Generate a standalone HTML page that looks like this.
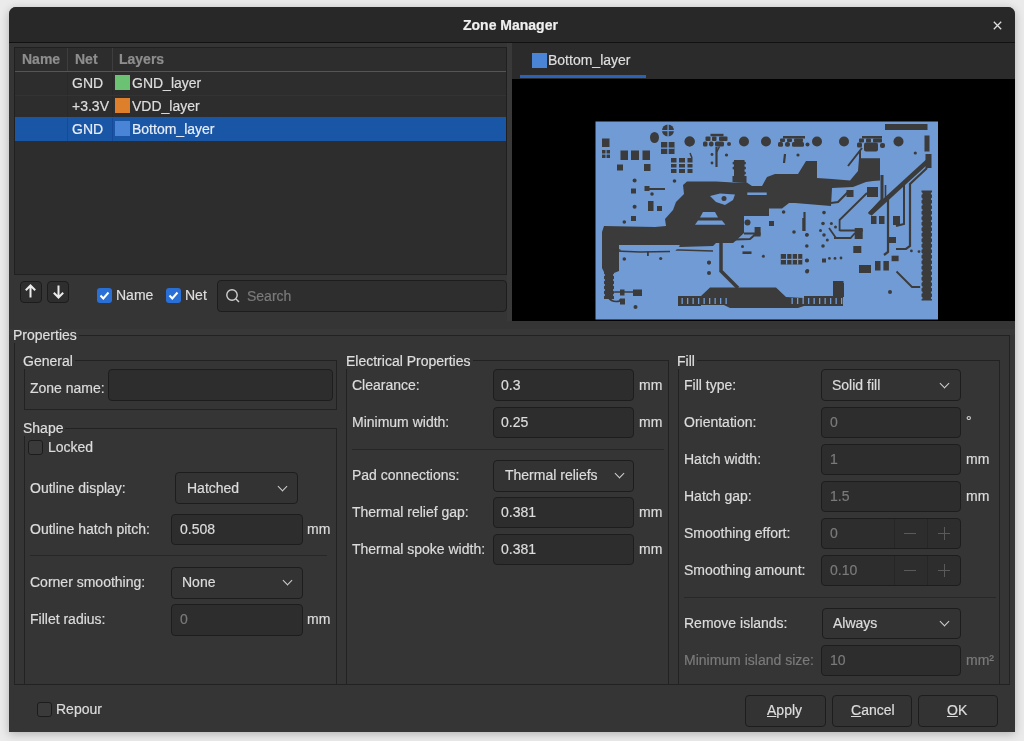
<!DOCTYPE html>
<html><head><meta charset="utf-8">
<style>
*{margin:0;padding:0;box-sizing:border-box}
html,body{width:1024px;height:741px;overflow:hidden;background:#ebebeb;font-family:"Liberation Sans",sans-serif;font-size:14px;color:#dedede}
.a{position:absolute}
.t{position:absolute;line-height:16px;white-space:nowrap;will-change:transform;-webkit-text-stroke:0.2px currentColor}
#win{position:absolute;left:9px;top:7px;width:1006px;height:725px;background:#353535;border-radius:7px 7px 0 0;box-shadow:0 2px 10px rgba(0,0,0,.25);overflow:hidden}
#title{position:absolute;left:0;top:0;width:1006px;height:36px;background:#282828;border-bottom:1px solid #121212}
.inp{position:absolute;background:#2d2d2d;border:1px solid #1d1d1d;border-radius:4px}
.btn{position:absolute;background:#333;border:1px solid #1d1d1d;border-radius:4px}
.grp{position:absolute;border:1px solid #222}
.lbl{position:absolute;line-height:16px;white-space:nowrap;color:#dcdcdc;will-change:transform;-webkit-text-stroke:0.2px currentColor}
.dis{color:#7a7a7a}
.chev{position:absolute;width:7px;height:7px;border-right:1.5px solid #d0d0d0;border-bottom:1.5px solid #d0d0d0;transform:rotate(45deg)}
.sw{position:absolute;width:15px;height:15px}
.cb{position:absolute;width:15px;height:15px;border-radius:3px}
</style></head><body>
<div id="win">
  <div id="title"></div>
</div>
<!-- absolute coords relative to page below -->
<div class="t" style="left:463px;top:17px;font-weight:bold;color:#f0f0f0">Zone Manager</div>
<svg class="a" style="left:991px;top:18.5px" width="12" height="12" viewBox="0 0 12 12"><path d="M2.8 2.8L10.2 10.2M10.2 2.8L2.8 10.2" stroke="#dedede" stroke-width="1.3"/></svg>

<!-- sash strips -->
<div class="a" style="left:507px;top:43px;width:5px;height:278px;background:#393939"></div>
<div class="a" style="left:9px;top:329px;width:1006px;height:6px;background:#383838"></div>
<!-- table -->
<div class="a" style="left:14px;top:47px;width:493px;height:228px;background:#2d2d2d;border:1px solid #202020"></div>
<div class="a" style="left:15px;top:71px;width:491px;height:1px;background:#555"></div>
<div class="a" style="left:67px;top:48px;width:1px;height:23px;background:#3e3e3e"></div>
<div class="a" style="left:112px;top:48px;width:1px;height:23px;background:#3e3e3e"></div>
<div class="a" style="left:67px;top:72px;width:1px;height:46px;background:#292929"></div>
<div class="a" style="left:112px;top:72px;width:1px;height:46px;background:#292929"></div>
<div class="a" style="left:15px;top:95px;width:491px;height:1px;background:#333"></div>
<div class="a" style="left:15px;top:117px;width:491px;height:24px;background:#1a56a6"></div>
<div class="a" style="left:67px;top:118px;width:1px;height:23px;background:#17499a"></div>
<div class="a" style="left:112px;top:118px;width:1px;height:23px;background:#17499a"></div>
<div class="t" style="left:22px;top:51px;font-weight:bold;color:#8e8e8e">Name</div>
<div class="t" style="left:75px;top:51px;font-weight:bold;color:#8e8e8e">Net</div>
<div class="t" style="left:119px;top:51px;font-weight:bold;color:#8e8e8e">Layers</div>
<div class="t" style="left:72px;top:75px">GND</div>
<div class="sw" style="left:115px;top:75px;background:#6cc273"></div>
<div class="t" style="left:132px;top:75px">GND_layer</div>
<div class="t" style="left:72px;top:98px">+3.3V</div>
<div class="sw" style="left:115px;top:98px;background:#de7f2c"></div>
<div class="t" style="left:132px;top:98px">VDD_layer</div>
<div class="t" style="left:72px;top:121px;color:#e8eef8">GND</div>
<div class="sw" style="left:115px;top:121px;background:#4a84d6"></div>
<div class="t" style="left:132px;top:121px;color:#e8eef8">Bottom_layer</div>

<!-- up/down -->
<div class="btn" style="left:19.5px;top:280.5px;width:22px;height:22px;background:#2e2e2e;border:1.5px solid #1c1c1c;border-radius:4px"></div>
<div class="btn" style="left:47px;top:280.5px;width:22px;height:22px;background:#2e2e2e;border:1.5px solid #1c1c1c;border-radius:4px"></div>
<svg class="a" style="left:19px;top:280px" width="23" height="23"><path d="M11.5 5.5V17.5M6.8 10.2L11.5 5.5L16.2 10.2" stroke="#ececec" stroke-width="2" fill="none"/></svg>
<svg class="a" style="left:47px;top:280px" width="23" height="23"><path d="M11.5 5.5V17.5M6.8 12.8L11.5 17.5L16.2 12.8" stroke="#ececec" stroke-width="2" fill="none"/></svg>
<div class="cb" style="left:97px;top:288px;background:#2a6fd6"></div>
<svg class="a" style="left:97px;top:288px" width="15" height="15"><path d="M3.5 7.5L6.3 10.5L11.5 4.5" stroke="#fff" stroke-width="2" fill="none"/></svg>
<div class="t" style="left:116px;top:287px">Name</div>
<div class="cb" style="left:166px;top:288px;background:#2a6fd6"></div>
<svg class="a" style="left:166px;top:288px" width="15" height="15"><path d="M3.5 7.5L6.3 10.5L11.5 4.5" stroke="#fff" stroke-width="2" fill="none"/></svg>
<div class="t" style="left:185px;top:287px">Net</div>
<div class="inp" style="left:217px;top:280px;width:290px;height:32px;background:#2e2e2e;border-radius:4px"></div>
<svg class="a" style="left:224px;top:287px" width="18" height="18"><circle cx="8" cy="8" r="5.2" stroke="#cfcfcf" stroke-width="1.4" fill="none"/><path d="M12 12L15 15" stroke="#cfcfcf" stroke-width="1.4"/></svg>
<div class="t dis" style="left:247px;top:288px">Search</div>

<!-- preview -->
<div class="a" style="left:512px;top:43px;width:503px;height:36px;background:#2b2b2b"></div>
<div class="sw" style="left:532px;top:53px;background:#4a84d6"></div>
<div class="t" style="left:548px;top:52px">Bottom_layer</div>
<div class="a" style="left:520px;top:75px;width:126px;height:3px;background:#2a62b8"></div>
<svg class="a" style="left:512px;top:79px" width="503" height="242" viewBox="512 79 503 242">
<rect x="512" y="79" width="503" height="242" fill="#000"/>
<rect x="595.5" y="121.5" width="342.5" height="198" fill="#709bd5"/>
<g fill="#3b3b3b">
<!-- central pour -->
<path d="M604,226 L655,227 L666,226 L665,219 L673,210 L676,202 L684,194 L683,185 L687,181.5 L716,181.5 L733,182.5 L746,182 L752,186 L762,186 L767,177 L775,174 L798,174 L806,161 L817,161 L817,178 L832,179 L850,180.5 L858,171 L859,158.5 L880,158.5 L880,180 L866,182 L853,187 L832,188 L831,206 L795,203 L789,203 L782,208.5 L769,208.5 L769,216 L744,216 L744,233 L736,240.5 L733,243 L716,243 L713,246 L680,247 L676,245 L619,245 L619,271 L614,273 L614,299 L604,299 L604,272 L602,268 L602,232 Z"/>
<!-- left scalloped column pads -->
<rect x="620" y="289.5" width="4.5" height="6"/><rect x="633" y="289.5" width="9" height="6.5"/><rect x="620" y="298.5" width="5" height="6"/>
<!-- bottom polygon -->
<path d="M701,296 L710,287.5 L776,287.5 L786,297 L804,298 L804,306 L798,308 L730,308 L724,305 L701,305 Z"/>
<!-- trace into bottom polygon -->
<path d="M721,243 L721,271 L738,288" fill="none" stroke="#3b3b3b" stroke-width="3.5"/>
<!-- right pad column -->
<rect x="921.5" y="190.5" width="10.5" height="110"/>
<!-- top bar -->
<rect x="885" y="124" width="42.5" height="6"/>
<!-- thick diagonal -->
<path d="M929,160 L870,214" fill="none" stroke="#3b3b3b" stroke-width="4.5"/>
<rect x="925.5" y="154" width="6" height="14"/>
<!-- circles -->
<circle cx="689.5" cy="141.5" r="5"/><circle cx="744" cy="141.5" r="5"/><circle cx="766" cy="141.5" r="5"/><circle cx="817" cy="141.5" r="5"/><circle cx="844" cy="141.5" r="5"/><circle cx="898.5" cy="141.5" r="5"/>
<!-- connector blobs -->
<rect x="710.5" y="133.8" width="13" height="2.5"/><rect x="705.5" y="136.5" width="5" height="4.5" rx="1"/><rect x="712" y="136.5" width="4.5" height="4.5" rx="1"/><rect x="719" y="136.5" width="8.5" height="4.5" rx="1"/><rect x="703" y="141.5" width="4.5" height="5" rx="1.5"/><rect x="709" y="141.5" width="4.5" height="5" rx="2"/><rect x="715" y="141.5" width="9" height="5" rx="1.5"/><rect x="727" y="142" width="4" height="4" rx="2"/><path d="M719.5,146.5 L716.8,152" stroke="#3b3b3b" stroke-width="1.5"/>
<rect x="783" y="136" width="22" height="2.5"/><rect x="780" y="138.5" width="5" height="3.5" rx="1"/><rect x="787" y="138.5" width="5" height="3.5" rx="1"/><rect x="794" y="138.5" width="9" height="3.5" rx="1"/><rect x="778" y="142" width="5" height="4.8" rx="1.5"/><rect x="785" y="142" width="5" height="4.8" rx="2"/><rect x="792" y="142" width="12" height="4.8" rx="1.5"/><rect x="805.5" y="142.5" width="4" height="4" rx="2"/>
<rect x="862" y="136" width="20" height="2.5"/><rect x="859" y="138.5" width="5" height="4" rx="1"/><rect x="866" y="138.5" width="5" height="4" rx="1"/><rect x="873" y="138.5" width="9" height="4" rx="1"/><rect x="857" y="142.5" width="5" height="5" rx="1.5"/><rect x="864" y="142.5" width="14" height="9" rx="2"/><rect x="880" y="143" width="5" height="5" rx="2"/>
<!-- pad stacks -->
<rect x="734" y="160" width="10.5" height="22"/><rect x="732.5" y="176" width="14" height="6"/><circle cx="734" cy="163" r="1.5"/><circle cx="744.5" cy="163" r="1.5"/><circle cx="734" cy="168" r="1.5"/><circle cx="744.5" cy="168" r="1.5"/><circle cx="744.5" cy="173" r="1.5"/>
<rect x="859" y="158.5" width="21" height="22"/>
<rect x="924.5" y="135.5" width="5" height="16"/>
<!-- top left small pads -->
<rect x="602" y="138.5" width="7.5" height="8.5"/><rect x="602" y="150" width="8" height="8"/>
<rect x="620.5" y="150.5" width="7.5" height="9.5"/><rect x="631" y="150.5" width="8" height="9.5"/><rect x="642.5" y="150.5" width="7.5" height="9.5"/>
<rect x="617" y="164.5" width="6" height="6"/><rect x="644" y="164" width="6.5" height="7"/>
<ellipse cx="654.5" cy="137.5" rx="4.5" ry="5.5"/>
<circle cx="668" cy="130.5" r="6"/>
<rect x="661" y="142" width="13.5" height="12"/>
<circle cx="689.8" cy="141.5" r="5"/>
<rect x="671" y="158" width="5.5" height="15"/><rect x="679" y="158" width="6" height="15"/><rect x="687.5" y="158" width="5" height="15"/>
<circle cx="674.5" cy="181" r="1.8"/><circle cx="634.6" cy="180.4" r="2"/><rect x="631" y="188.5" width="5" height="5"/>
<rect x="644.5" y="186" width="5" height="5"/><rect x="648" y="188" width="17" height="2"/>
<circle cx="652" cy="194" r="1.8"/><rect x="648" y="201" width="5.5" height="10"/><rect x="657" y="206" width="5" height="5"/>
<circle cx="634.6" cy="206.7" r="2"/><rect x="631" y="216" width="5" height="5"/>
<!-- left column -->
<rect x="604" y="272" width="10" height="27"/>
<path d="M614,292 L633,292 M608,297 Q612,303 620,301" fill="none" stroke="#3b3b3b" stroke-width="1.6"/>
<path d="M612,248 L614,250 L680,250 L713,251" fill="none" stroke="#3b3b3b" stroke-width="1.6"/>
<!-- connector row bottom -->
<rect x="678" y="296" width="23" height="10"/>
<rect x="804" y="296" width="39" height="10"/>
<!-- center-right traces -->
<path d="M927,168 L910,184 L910,246 L906,249 L896,249" fill="none" stroke="#3b3b3b" stroke-width="2.2"/>
<path d="M904,183 L904,224 L896,226" fill="none" stroke="#3b3b3b" stroke-width="2"/>
<path d="M888,197 L888,252 L884,255" fill="none" stroke="#3b3b3b" stroke-width="2.2"/>
<path d="M882,175 L882,200 L869,214" fill="none" stroke="#3b3b3b" stroke-width="3"/>
<path d="M885.5,185 L885.5,200" fill="none" stroke="#3b3b3b" stroke-width="1.6"/>
<path d="M848,166 L862,148 M860,150 L860,166" fill="none" stroke="#3b3b3b" stroke-width="2"/>
<path d="M831,203 L838,202 L849,191" fill="none" stroke="#3b3b3b" stroke-width="2"/>
<rect x="846.5" y="190" width="7" height="7"/><rect x="867" y="187" width="11" height="10"/>
<path d="M867,193 L839.6,220 L839.6,231 M839.6,230.5 L863,230.5 M834,238 L850.6,238 L855,233 M829,228 L836,238" fill="none" stroke="#3b3b3b" stroke-width="1.8"/>
<rect x="854.7" y="228" width="8" height="11"/>
<path d="M896.5,271.5 L912,287 L922,287" fill="none" stroke="#3b3b3b" stroke-width="1.8"/>
<rect x="871" y="216" width="5.5" height="8"/><rect x="879" y="216" width="5.5" height="8"/><rect x="893" y="216" width="7" height="9"/>
<rect x="889" y="237" width="7" height="6"/><rect x="853.3" y="246" width="8" height="7"/><rect x="891.6" y="255.7" width="7" height="5.5"/>
<rect x="859" y="265" width="12" height="8"/><rect x="875" y="261" width="5.5" height="9.5"/><rect x="883.4" y="261" width="5.5" height="9.5"/>
<path d="M804.5,212 L804.5,231" fill="none" stroke="#3b3b3b" stroke-width="2.2"/>
<circle cx="806.8" cy="235" r="1.8"/><circle cx="824" cy="212.6" r="1.8"/><circle cx="823" cy="223.5" r="1.8"/><circle cx="831.4" cy="223.5" r="1.5"/>
<circle cx="835.5" cy="227" r="1.5"/><circle cx="820.5" cy="230.4" r="1.5"/><circle cx="824" cy="235" r="1.8"/><circle cx="827.3" cy="240" r="1.5"/>
<circle cx="806.8" cy="246" r="1.8"/><circle cx="823" cy="246" r="1.8"/><circle cx="806.8" cy="260.5" r="1.8"/><rect x="822" y="258.5" width="4" height="4"/>
<circle cx="829.4" cy="258.4" r="1.4"/><circle cx="835" cy="258.4" r="1.4"/><circle cx="841" cy="258" r="1.4"/><circle cx="807.5" cy="270.7" r="1.8"/>
<circle cx="911.4" cy="250.9" r="1.4"/><circle cx="919" cy="251.6" r="1.4"/><circle cx="890" cy="292" r="2"/><circle cx="915.3" cy="153" r="1.6"/>
<rect x="833" y="281" width="10.5" height="16"/><path d="M843,283 L843,297" stroke="#3b3b3b" stroke-width="2"/>
<!-- mid region pads/dots -->
<rect x="780.8" y="254" width="21.5" height="10.5"/>
<rect x="769" y="221" width="5" height="5"/>
<path d="M803.5,218 L803.5,231" fill="none" stroke="#3b3b3b" stroke-width="2.5"/>
<circle cx="794" cy="232" r="1.8"/><circle cx="807" cy="234.7" r="1.8"/><circle cx="807" cy="260.4" r="2"/><circle cx="807" cy="271.5" r="2"/>
<circle cx="709" cy="262.5" r="2"/><circle cx="709" cy="273" r="2"/><circle cx="763.4" cy="256.2" r="1.5"/>
<rect x="742.5" y="251.4" width="9" height="2.6"/><circle cx="742.5" cy="246.5" r="1.5"/>
<circle cx="747.5" cy="222.5" r="3"/><rect x="754.6" y="227" width="6" height="8"/><path d="M744,233.4 L760.6,233.4 M735,239.5 L750,239 L754,235.5 L760.6,235.5" fill="none" stroke="#3b3b3b" stroke-width="2"/><circle cx="783.6" cy="212" r="1.8"/>
<!-- top traces -->
<path d="M716.5,147 L716.5,167 M785,154 L784,163" fill="none" stroke="#3b3b3b" stroke-width="2.2"/>
<circle cx="712" cy="154.5" r="1.4"/><circle cx="712" cy="163" r="1.4"/><circle cx="726.5" cy="155" r="1.6"/><circle cx="798" cy="155" r="1.6"/>
<path d="M690,153 L692,158" fill="none" stroke="#3b3b3b" stroke-width="1.5"/>
<circle cx="620" cy="300" r="1"/><circle cx="624.3" cy="259" r="1.8"/><circle cx="660.7" cy="258.5" r="1.6"/><circle cx="624.3" cy="222" r="1.8"/><path d="M630,244 Q636,249 645,247 L650,244 Z"/><rect x="647" y="246" width="1.8" height="10"/><rect x="658" y="244" width="1.5" height="6"/><circle cx="635.5" cy="307" r="2"/>
<circle cx="709" cy="262.8" r="1.8"/>
</g>
<!-- light holes in pour -->
<g fill="#709bd5">
<rect x="681.5" y="298" width="1.3" height="6"/><rect x="687.0" y="298" width="1.3" height="6"/><rect x="692.5" y="298" width="1.3" height="6"/><rect x="698.0" y="298" width="1.3" height="6"/><rect x="703.5" y="298" width="1.3" height="6"/><rect x="709.0" y="298" width="1.3" height="6"/><rect x="714.5" y="298" width="1.3" height="6"/><rect x="720.0" y="298" width="1.3" height="6"/><rect x="725.5" y="298" width="1.3" height="6"/><rect x="791.5" y="298" width="1.3" height="6"/><rect x="797.0" y="298" width="1.3" height="6"/><rect x="802.5" y="298" width="1.3" height="6"/><rect x="808.0" y="298" width="1.3" height="6"/><rect x="813.5" y="298" width="1.3" height="6"/><rect x="819.0" y="298" width="1.3" height="6"/><rect x="824.5" y="298" width="1.3" height="6"/><rect x="830.0" y="298" width="1.3" height="6"/><rect x="835.5" y="298" width="1.3" height="6"/><rect x="841.0" y="298" width="1.3" height="6"/><rect x="786" y="254" width="1.2" height="10.5"/><rect x="791.5" y="254" width="1.2" height="10.5"/><rect x="797" y="254" width="1.2" height="10.5"/><rect x="780.8" y="258.8" width="21.5" height="1.2"/><rect x="667.5" y="124" width="1.2" height="13"/><rect x="661.5" y="130" width="13" height="1.2"/><rect x="667.3" y="142" width="1.4" height="12"/><rect x="661" y="147.5" width="13.5" height="1.3"/><rect x="602" y="153.5" width="8" height="1.1"/><rect x="605.5" y="150" width="1.1" height="8"/><rect x="671" y="162.5" width="22" height="1.5"/><rect x="671" y="167.5" width="22" height="1.5"/>
<circle cx="921.3" cy="193.5" r="1.3"/><circle cx="932.2" cy="193.5" r="1.3"/><circle cx="921.3" cy="199.0" r="1.3"/><circle cx="932.2" cy="199.0" r="1.3"/><circle cx="921.3" cy="204.5" r="1.3"/><circle cx="932.2" cy="204.5" r="1.3"/><circle cx="921.3" cy="210.0" r="1.3"/><circle cx="932.2" cy="210.0" r="1.3"/><circle cx="921.3" cy="215.5" r="1.3"/><circle cx="932.2" cy="215.5" r="1.3"/><circle cx="921.3" cy="221.0" r="1.3"/><circle cx="932.2" cy="221.0" r="1.3"/><circle cx="921.3" cy="226.5" r="1.3"/><circle cx="932.2" cy="226.5" r="1.3"/><circle cx="921.3" cy="232.0" r="1.3"/><circle cx="932.2" cy="232.0" r="1.3"/><circle cx="921.3" cy="237.5" r="1.3"/><circle cx="932.2" cy="237.5" r="1.3"/><circle cx="921.3" cy="243.0" r="1.3"/><circle cx="932.2" cy="243.0" r="1.3"/><circle cx="921.3" cy="248.5" r="1.3"/><circle cx="932.2" cy="248.5" r="1.3"/><circle cx="921.3" cy="254.0" r="1.3"/><circle cx="932.2" cy="254.0" r="1.3"/><circle cx="921.3" cy="259.5" r="1.3"/><circle cx="932.2" cy="259.5" r="1.3"/><circle cx="921.3" cy="265.0" r="1.3"/><circle cx="932.2" cy="265.0" r="1.3"/><circle cx="921.3" cy="270.5" r="1.3"/><circle cx="932.2" cy="270.5" r="1.3"/><circle cx="921.3" cy="276.0" r="1.3"/><circle cx="932.2" cy="276.0" r="1.3"/><circle cx="921.3" cy="281.5" r="1.3"/><circle cx="932.2" cy="281.5" r="1.3"/><circle cx="921.3" cy="287.0" r="1.3"/><circle cx="932.2" cy="287.0" r="1.3"/><circle cx="921.3" cy="292.5" r="1.3"/><circle cx="932.2" cy="292.5" r="1.3"/><circle cx="921.3" cy="298.0" r="1.3"/><circle cx="932.2" cy="298.0" r="1.3"/><circle cx="603.8" cy="275.0" r="1.2"/><circle cx="614.2" cy="275.0" r="1.2"/><circle cx="603.8" cy="280.0" r="1.2"/><circle cx="614.2" cy="280.0" r="1.2"/><circle cx="603.8" cy="285.0" r="1.2"/><circle cx="614.2" cy="285.0" r="1.2"/><circle cx="603.8" cy="290.0" r="1.2"/><circle cx="614.2" cy="290.0" r="1.2"/><circle cx="603.8" cy="295.0" r="1.2"/><circle cx="614.2" cy="295.0" r="1.2"/>
<path d="M710,196 L720,193.5 L735,194.5 L733,200 L725,205 L716,202 Z"/>
<rect x="747.3" y="192.5" width="19.4" height="2.5"/>
<path d="M700,217.4 L703,212 L715,212 L718,217.4 Z"/>
<path d="M695,224.7 L698,220.4 L722,220.4 L725.4,224.7 Z"/>
<path d="M619,245 L680,245 L675,251.5 L621,251.5 Z" />
<rect x="708" y="193" width="26" height="0.01"/>
</g>
<g fill="#3b3b3b">
<circle cx="724" cy="198.5" r="2.5"/>
<path d="M612,248 L616,251 L640,252 L670,251.5" fill="none" stroke="#3b3b3b" stroke-width="1.6"/>
</g>
</svg>


<!-- properties -->
<div class="grp" style="left:14px;top:343px;width:996px;height:342px;border-top:none"></div>
<div class="a" style="left:79px;top:335px;width:931px;height:1px;background:#222"></div>
<div class="a" style="left:1009px;top:335px;width:1px;height:8px;background:#222"></div>
<div class="t" style="left:13px;top:327px">Properties</div>

<div class="grp" style="left:24px;top:360px;width:313px;height:50px"></div>
<div class="t" style="left:23px;top:353px;background:#353535;padding-right:2px">General</div>
<div class="lbl" style="left:30px;top:380px">Zone name:</div>
<div class="inp" style="left:108px;top:369px;width:225px;height:32px"></div>

<div class="grp" style="left:24px;top:428px;width:313px;height:257px"></div>
<div class="t" style="left:23px;top:420px;background:#353535;padding-right:2px">Shape</div>
<div class="cb" style="left:28px;top:440px;border:1px solid #1c1c1c;background:#3a3a3a"></div>
<div class="lbl" style="left:48px;top:439px">Locked</div>
<div class="lbl" style="left:30px;top:480px">Outline display:</div>
<div class="btn" style="left:175px;top:472px;width:123px;height:32px"></div>
<div class="lbl" style="left:187px;top:480px">Hatched</div>
<div class="chev" style="left:279px;top:483px"></div>
<div class="lbl" style="left:30px;top:521px">Outline hatch pitch:</div>
<div class="inp" style="left:171px;top:514px;width:132px;height:31px"></div>
<div class="lbl" style="left:180px;top:521px">0.508</div>
<div class="lbl" style="left:307px;top:521px">mm</div>
<div class="a" style="left:30px;top:555px;width:297px;height:1px;background:#272727"></div>
<div class="lbl" style="left:30px;top:574px">Corner smoothing:</div>
<div class="btn" style="left:171px;top:567px;width:132px;height:32px"></div>
<div class="lbl" style="left:182px;top:574px">None</div>
<div class="chev" style="left:284px;top:577px"></div>
<div class="lbl" style="left:30px;top:611px">Fillet radius:</div>
<div class="inp" style="left:171px;top:604px;width:132px;height:32px"></div>
<div class="lbl dis" style="left:180px;top:611px">0</div>
<div class="lbl" style="left:307px;top:611px">mm</div>

<div class="grp" style="left:346px;top:360px;width:323px;height:325px"></div>
<div class="t" style="left:346px;top:353px;background:#353535;padding-right:2px">Electrical Properties</div>
<div class="lbl" style="left:352px;top:377px">Clearance:</div>
<div class="inp" style="left:493px;top:369px;width:141px;height:32px"></div>
<div class="lbl" style="left:501px;top:377px">0.3</div>
<div class="lbl" style="left:639px;top:377px">mm</div>
<div class="lbl" style="left:352px;top:414px">Minimum width:</div>
<div class="inp" style="left:493px;top:407px;width:141px;height:31px"></div>
<div class="lbl" style="left:501px;top:414px">0.25</div>
<div class="lbl" style="left:639px;top:414px">mm</div>
<div class="a" style="left:352px;top:449px;width:312px;height:1px;background:#272727"></div>
<div class="lbl" style="left:352px;top:467px">Pad connections:</div>
<div class="btn" style="left:493px;top:460px;width:141px;height:32px"></div>
<div class="lbl" style="left:505px;top:467px">Thermal reliefs</div>
<div class="chev" style="left:616px;top:470px"></div>
<div class="lbl" style="left:352px;top:504px">Thermal relief gap:</div>
<div class="inp" style="left:493px;top:497px;width:141px;height:31px"></div>
<div class="lbl" style="left:501px;top:504px">0.381</div>
<div class="lbl" style="left:639px;top:504px">mm</div>
<div class="lbl" style="left:352px;top:541px">Thermal spoke width:</div>
<div class="inp" style="left:493px;top:534px;width:141px;height:31px"></div>
<div class="lbl" style="left:501px;top:541px">0.381</div>
<div class="lbl" style="left:639px;top:541px">mm</div>

<div class="grp" style="left:678px;top:360px;width:322px;height:325px"></div>
<div class="t" style="left:677px;top:353px;background:#353535;padding-right:2px">Fill</div>
<div class="lbl" style="left:684px;top:377px">Fill type:</div>
<div class="btn" style="left:821px;top:369px;width:140px;height:32px"></div>
<div class="lbl" style="left:832px;top:377px">Solid fill</div>
<div class="chev" style="left:941px;top:380px"></div>
<div class="lbl" style="left:684px;top:414px">Orientation:</div>
<div class="inp" style="left:821px;top:407px;width:140px;height:31px"></div>
<div class="lbl dis" style="left:830px;top:414px">0</div>
<div class="lbl" style="left:966px;top:413px">°</div>
<div class="lbl" style="left:684px;top:451px">Hatch width:</div>
<div class="inp" style="left:821px;top:444px;width:140px;height:31px"></div>
<div class="lbl dis" style="left:830px;top:451px">1</div>
<div class="lbl" style="left:966px;top:451px">mm</div>
<div class="lbl" style="left:684px;top:488px">Hatch gap:</div>
<div class="inp" style="left:821px;top:481px;width:140px;height:31px"></div>
<div class="lbl dis" style="left:830px;top:488px">1.5</div>
<div class="lbl" style="left:966px;top:488px">mm</div>
<div class="lbl" style="left:684px;top:525px">Smoothing effort:</div>
<div class="inp" style="left:821px;top:518px;width:140px;height:31px"></div>
<div class="lbl dis" style="left:830px;top:525px">0</div>
<div class="a" style="left:894px;top:519px;width:1px;height:29px;background:#262626"></div>
<div class="a" style="left:927px;top:519px;width:1px;height:29px;background:#262626"></div>
<div class="a" style="left:904px;top:533px;width:12px;height:1px;background:#5a5a5a"></div>
<div class="a" style="left:938px;top:533px;width:12px;height:1px;background:#5a5a5a"></div>
<div class="a" style="left:943.5px;top:527px;width:1px;height:13px;background:#5a5a5a"></div>
<div class="lbl" style="left:684px;top:562px">Smoothing amount:</div>
<div class="inp" style="left:821px;top:555px;width:140px;height:31px"></div>
<div class="lbl dis" style="left:830px;top:562px">0.10</div>
<div class="a" style="left:894px;top:556px;width:1px;height:29px;background:#262626"></div>
<div class="a" style="left:927px;top:556px;width:1px;height:29px;background:#262626"></div>
<div class="a" style="left:904px;top:570px;width:12px;height:1px;background:#5a5a5a"></div>
<div class="a" style="left:938px;top:570px;width:12px;height:1px;background:#5a5a5a"></div>
<div class="a" style="left:943.5px;top:564px;width:1px;height:13px;background:#5a5a5a"></div>
<div class="a" style="left:684px;top:597px;width:312px;height:1px;background:#272727"></div>
<div class="lbl" style="left:684px;top:615px">Remove islands:</div>
<div class="btn" style="left:822px;top:608px;width:139px;height:31px"></div>
<div class="lbl" style="left:833px;top:615px">Always</div>
<div class="chev" style="left:941px;top:618px"></div>
<div class="lbl dis" style="left:684px;top:652px">Minimum island size:</div>
<div class="inp" style="left:821px;top:645px;width:140px;height:31px"></div>
<div class="lbl dis" style="left:830px;top:652px">10</div>
<div class="lbl dis" style="left:966px;top:652px">mm²</div>

<!-- bottom -->
<div class="cb" style="left:37px;top:702px;border:1px solid #1c1c1c;background:#3a3a3a"></div>
<div class="lbl" style="left:56px;top:701px">Repour</div>
<div class="btn" style="left:745px;top:695px;width:81px;height:32px"></div>
<div class="lbl" style="left:767px;top:702px"><u>A</u>pply</div>
<div class="btn" style="left:832px;top:695px;width:80px;height:32px"></div>
<div class="lbl" style="left:851px;top:702px"><u>C</u>ancel</div>
<div class="btn" style="left:918px;top:695px;width:80px;height:32px"></div>
<div class="lbl" style="left:947px;top:702px"><u>O</u>K</div>
</body></html>
